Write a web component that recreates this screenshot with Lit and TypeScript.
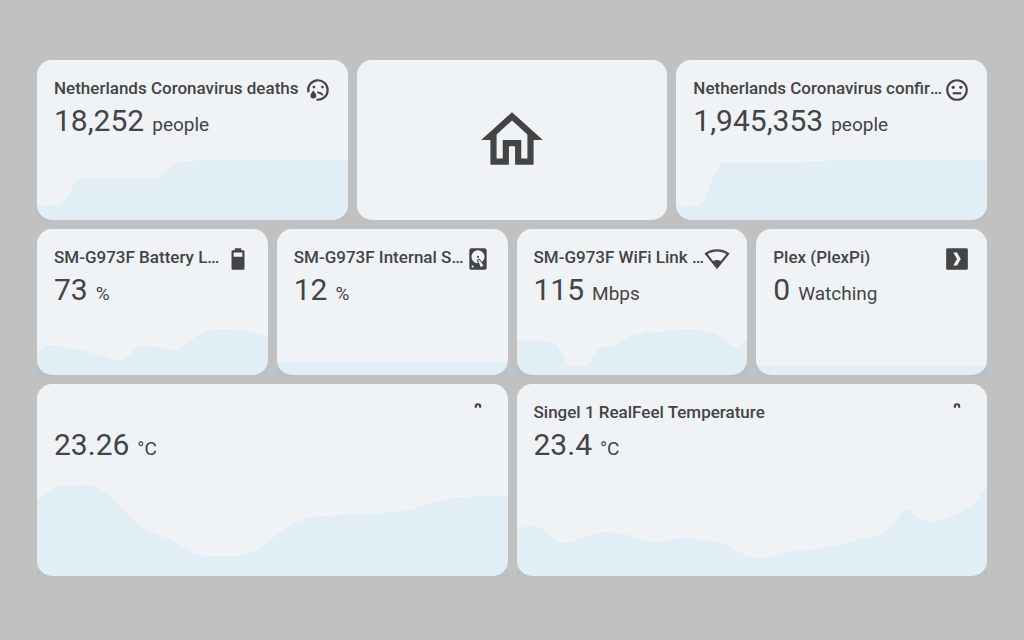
import { LitElement, html, css, svg } from "lit";
import { customElement, property } from "lit/decorators.js";

type Point = [number, number];

interface Sensor {
  size: "third" | "quarter" | "half";
  name: string;
  value: string;
  unit: string;
  icon: string;
  width: number;
  points: Point[];
}

const icons: Record<string, unknown> = {
  cry: svg`
    <path d="M3.2 14.2A9 9 0 1 1 10.6 20.9" fill="none" stroke="currentColor" stroke-width="2"/>
    <circle cx="8.2" cy="9.3" r="1.3"/>
    <circle cx="16.1" cy="9.3" r="1.3"/>
    <path d="M11.4 14.3C13.2 14 15 15 16.4 16.6" fill="none" stroke="currentColor" stroke-width="1.8"/>
    <path d="M7.7 12.2C6.6 14 5 15.5 5 17.1A2.7 2.7 0 0 0 10.4 17.1C10.4 15.5 8.8 14 7.7 12.2Z"/>`,
  neutral: svg`
    <circle cx="12" cy="12" r="9" fill="none" stroke="currentColor" stroke-width="2"/>
    <circle cx="8.5" cy="9.5" r="1.5"/>
    <circle cx="15.5" cy="9.5" r="1.5"/>
    <path d="M8 14H16V16H8Z"/>`,
  battery: svg`<path d="M16,10H8V6H16M16.67,4H15V2H9V4H7.33A1.33,1.33 0 0,0 6,5.33V20.67C6,21.4 6.6,22 7.33,22H16.67A1.33,1.33 0 0,0 18,20.67V5.33C18,4.6 17.4,4 16.67,4Z"/>`,
  disk: svg`<path d="M6,2H18A2,2 0 0,1 20,4V20A2,2 0 0,1 18,22H6A2,2 0 0,1 4,20V4A2,2 0 0,1 6,2M12,4A6,6 0 0,0 6,10C6,13.31 8.69,16 12.1,16L11.22,13.77C10.95,13.29 11.11,12.68 11.59,12.4L12.45,11.9C12.93,11.63 13.54,11.79 13.82,12.27L15.74,14.69C17.12,13.59 18,11.9 18,10A6,6 0 0,0 12,4M12,9A1,1 0 0,1 13,10A1,1 0 0,1 12,11A1,1 0 0,1 11,10A1,1 0 0,1 12,9M7,18A1,1 0 0,0 6,19A1,1 0 0,0 7,20A1,1 0 0,0 8,19A1,1 0 0,0 7,18M12.09,13.27L14.58,19.58L17.17,18.08L12.95,12.77L12.09,13.27Z"/>`,
  wifi: svg`<path d="M12,3C7.79,3 3.7,4.41 0.38,7C4.41,12.06 7.89,16.37 12,21.5C16.08,16.42 20.24,11.24 23.65,7C20.32,4.41 16.22,3 12,3M12,5C15.07,5 18.09,5.86 20.71,7.45L15.61,13.81C14.5,13.28 13.25,13 12,13C10.75,13 9.5,13.28 8.39,13.8L3.27,7.44C5.91,5.85 8.93,5 12,5Z"/>`,
  plex: svg`<path fill-rule="evenodd" d="M3.2,2H20.8A1.2,1.2 0 0,1 22,3.2V20.8A1.2,1.2 0 0,1 20.8,22H3.2A1.2,1.2 0 0,1 2,20.8V3.2A1.2,1.2 0 0,1 3.2,2M8.56,6L12,12L8.56,18H12.06L15.5,12L12.06,6Z"/>`,
  thermometer: svg`<path d="M9,6.3V5A3,3 0 0,1 15,5V6.3H13V5A1,1 0 0,0 11,5V6.3Z"/>`,
  home: svg`<path d="M12 5.69L17 10.19V18H15V12H9V18H7V10.19L12 5.69M12 3L2 12H5V20H11V14H13V20H19V12H22L12 3Z"/>`,
};

const sensors: Sensor[] = [
  {
    size: "third", name: "Netherlands Coronavirus deaths", value: "18,252", unit: "people", icon: "cry", width: 311,
    points: [[0, 14], [22, 16], [29, 21], [37, 35], [46, 42], [119, 42], [126, 46], [136, 55], [149, 59], [206, 60], [311, 60]],
  },
  {
    size: "third", name: "Netherlands Coronavirus confirmed", value: "1,945,353", unit: "people", icon: "neutral", width: 311,
    points: [[0, 13], [23, 15], [28, 20], [34, 34], [39, 47], [46, 57], [120, 57], [140, 59], [207, 60], [311, 60]],
  },
  {
    size: "quarter", name: "SM-G973F Battery Level", value: "73", unit: "%", icon: "battery", width: 231,
    points: [[0, 23], [13, 30], [43, 25], [66, 19], [81, 14], [89, 17], [102, 29], [119, 28], [139, 25], [149, 30], [159, 39], [174, 45], [193, 46], [209, 44], [231, 38]],
  },
  {
    size: "quarter", name: "SM-G973F Internal Storage", value: "12", unit: "%", icon: "disk", width: 231,
    points: [[0, 13], [231, 13]],
  },
  {
    size: "quarter", name: "SM-G973F WiFi Link Speed", value: "115", unit: "Mbps", icon: "wifi", width: 231,
    points: [[0, 35], [10, 34], [19, 36], [30, 33], [38, 32], [45, 21], [53, 9], [69, 9], [77, 20], [85, 28], [97, 29], [112, 38], [123, 41], [132, 44], [142, 43], [157, 45], [175, 46], [193, 43], [205, 38], [215, 29], [221, 27], [231, 36]],
  },
  {
    size: "quarter", name: "Plex (PlexPi)", value: "0", unit: "Watching", icon: "plex", width: 231,
    points: [[0, 9], [231, 9]],
  },
  {
    size: "half", name: "", value: "23.26", unit: "°C", icon: "thermometer", width: 471,
    points: [[0, 76], [13, 85], [26, 90], [53, 91], [69, 83], [89, 63], [106, 48], [139, 34], [156, 24], [171, 20], [199, 20], [214, 24], [229, 32], [249, 48], [266, 56], [283, 60], [306, 61], [366, 65], [393, 72], [426, 79], [459, 80], [471, 81]],
  },
  {
    size: "half", name: "Singel 1 RealFeel Temperature", value: "23.4", unit: "°C", icon: "thermometer", width: 471,
    points: [[0, 46], [16, 51], [27, 46], [37, 37], [46, 33], [63, 37], [85, 44], [110, 41], [142, 34], [167, 38], [203, 33], [227, 22], [243, 18], [267, 24], [290, 26], [320, 31], [347, 38], [365, 42], [377, 53], [390, 67], [402, 58], [414, 54], [437, 61], [453, 69], [471, 90]],
  },
];

const GRAPH_HEIGHT = 100;

/** Area under a monotone cubic curve through the points (x, height above the base). */
function areaPath(points: Point[]): string {
  const n = points.length;
  const slope = points.slice(1).map((p, i) => (p[1] - points[i][1]) / (p[0] - points[i][0]));
  const tangent = points.map((_, i) => {
    if (i === 0) return slope[0];
    if (i === n - 1) return slope[n - 2];
    const a = slope[i - 1];
    const b = slope[i];
    return a * b <= 0 ? 0 : (2 * a * b) / (a + b);
  });
  const at = (x: number, h: number) => `${x.toFixed(2)},${(GRAPH_HEIGHT - h).toFixed(2)}`;
  let d = `M${at(points[0][0], 0)}L${at(...points[0])}`;
  for (let i = 1; i < n; i++) {
    const [x0, h0] = points[i - 1];
    const [x1, h1] = points[i];
    const third = (x1 - x0) / 3;
    d += `C${at(x0 + third, h0 + tangent[i - 1] * third)} ${at(x1 - third, h1 - tangent[i] * third)} ${at(x1, h1)}`;
  }
  return `${d}L${at(points[n - 1][0], 0)}Z`;
}

@customElement("sensor-card")
export class SensorCard extends LitElement {
  @property({ attribute: false }) sensor!: Sensor;

  static styles = css`
    :host {
      display: flex;
      flex-direction: column;
      justify-content: space-between;
      min-width: 0;
      background: #f0f3f6;
      border-radius: 15px;
    }
    .info {
      padding: 17px 17px 0;
    }
    .head {
      display: flex;
      align-items: flex-start;
      height: 26px;
    }
    .name {
      flex: 1;
      min-width: 0;
      min-height: 22px;
      margin: 0;
      overflow: hidden;
      white-space: nowrap;
      text-overflow: ellipsis;
      font-size: 17px;
      font-weight: 500;
      line-height: 22px;
    }
    .icon {
      flex: none;
      width: 26px;
      height: 26px;
      fill: currentColor;
    }
    .state {
      display: flex;
      align-items: baseline;
      gap: 8px;
      margin: 0;
      line-height: 36px;
    }
    .value {
      font-size: 30px;
    }
    .unit {
      font-size: 19px;
    }
    .graph {
      display: block;
      width: 100%;
      height: 100px;
      margin-top: -40px;
      fill: rgba(73, 187, 246, 0.09);
    }
  `;

  render() {
    const s = this.sensor;
    return html`
      <div class="info">
        <div class="head">
          <h2 class="name">${s.name}</h2>
          <svg class="icon" viewBox="0 0 24 24" aria-hidden="true">${icons[s.icon]}</svg>
        </div>
        <p class="state"><span class="value">${s.value}</span><span class="unit">${s.unit}</span></p>
      </div>
      <svg class="graph" viewBox="0 0 ${s.width} ${GRAPH_HEIGHT}" preserveAspectRatio="none" aria-hidden="true">
        <path d=${areaPath(s.points)}></path>
      </svg>
    `;
  }
}

@customElement("app-root")
export class AppRoot extends LitElement {
  static styles = css`
    :host {
      display: block;
      box-sizing: border-box;
      min-height: 100vh;
      padding: 60px 37px;
      background: #c1c1c1;
      color: #444;
      font-family: Roboto, "Liberation Sans", sans-serif;
    }
    .board {
      display: flex;
      flex-direction: column;
      gap: 9px;
    }
    .row {
      display: grid;
      grid-auto-flow: column;
      grid-auto-columns: minmax(0, 1fr);
      gap: 9px;
    }
    .third {
      min-height: 160px;
    }
    .quarter {
      min-height: 146px;
    }
    .half {
      min-height: 192px;
    }
    .home {
      display: flex;
      align-items: center;
      justify-content: center;
      padding: 0;
      border: 0;
      border-radius: 15px;
      background: #f0f3f6;
      color: inherit;
    }
    .home-icon {
      width: 74px;
      height: 74px;
      fill: currentColor;
    }
  `;

  private card(s: Sensor) {
    return html`<sensor-card class=${s.size} .sensor=${s}></sensor-card>`;
  }

  render() {
    return html`
      <main class="board">
        <section class="row">
          ${this.card(sensors[0])}
          <button class="home" type="button" aria-label="Home">
            <svg class="home-icon" viewBox="0 0 24 24" aria-hidden="true">${icons.home}</svg>
          </button>
          ${this.card(sensors[1])}
        </section>
        <section class="row">${sensors.slice(2, 6).map((s) => this.card(s))}</section>
        <section class="row">${sensors.slice(6).map((s) => this.card(s))}</section>
      </main>
    `;
  }
}
